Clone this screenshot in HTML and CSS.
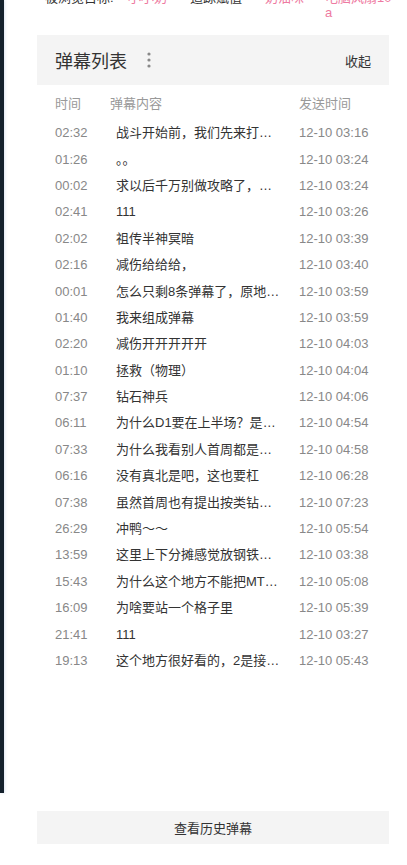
FILE: index.html
```html
<!DOCTYPE html>
<html lang="zh-CN">
<head>
<meta charset="utf-8">
<title>弹幕列表</title>
<link rel="stylesheet" href="styles.css">
</head>
<body>
<div class="layout">
  <div class="edge"></div>
  <div class="main">
    <div class="info">
      <span class="c1 dark">被浏览目标:</span>
      <span class="c2 pink">小小奶</span>
      <span class="c3 dark">追踪赋值</span>
      <span class="c4 pink">奶油味</span>
      <span class="c5 pink">电脑风扇10a</span>
    </div>
    <div class="panel">
      <div class="panel-head">
        <div class="head-left">
          <span class="title">弹幕列表</span>
          <svg class="dots" width="4" height="16" viewBox="0 0 4 16"><circle cx="2" cy="2" r="1.6"/><circle cx="2" cy="8" r="1.6"/><circle cx="2" cy="14" r="1.6"/></svg>
        </div>
        <span class="collapse">收起</span>
      </div>
      <div class="cols">
        <span>时间</span><span>弹幕内容</span><span>发送时间</span>
      </div>
      <div class="list">
        <div class="row"><span class="t">02:32</span><span class="m">战斗开始前，我们先来打个招呼吧</span><span class="d">12-10 03:16</span></div>
        <div class="row"><span class="t">01:26</span><span class="m">。。</span><span class="d">12-10 03:24</span></div>
        <div class="row"><span class="t">00:02</span><span class="m">求以后千万别做攻略了，真的</span><span class="d">12-10 03:24</span></div>
        <div class="row"><span class="t">02:41</span><span class="m">111</span><span class="d">12-10 03:26</span></div>
        <div class="row"><span class="t">02:02</span><span class="m">祖传半神冥暗</span><span class="d">12-10 03:39</span></div>
        <div class="row"><span class="t">02:16</span><span class="m">减伤给给给，</span><span class="d">12-10 03:40</span></div>
        <div class="row"><span class="t">00:01</span><span class="m">怎么只剩8条弹幕了，原地起飞</span><span class="d">12-10 03:59</span></div>
        <div class="row"><span class="t">01:40</span><span class="m">我来组成弹幕</span><span class="d">12-10 03:59</span></div>
        <div class="row"><span class="t">02:20</span><span class="m">减伤开开开开开</span><span class="d">12-10 04:03</span></div>
        <div class="row"><span class="t">01:10</span><span class="m">拯救（物理）</span><span class="d">12-10 04:04</span></div>
        <div class="row"><span class="t">07:37</span><span class="m">钻石神兵</span><span class="d">12-10 04:06</span></div>
        <div class="row"><span class="t">06:11</span><span class="m">为什么D1要在上半场？是不是</span><span class="d">12-10 04:54</span></div>
        <div class="row"><span class="t">07:33</span><span class="m">为什么我看别人首周都是这样</span><span class="d">12-10 04:58</span></div>
        <div class="row"><span class="t">06:16</span><span class="m">没有真北是吧，这也要杠</span><span class="d">12-10 06:28</span></div>
        <div class="row"><span class="t">07:38</span><span class="m">虽然首周也有提出按类钻石的</span><span class="d">12-10 07:23</span></div>
        <div class="row"><span class="t">26:29</span><span class="m">冲鸭～～</span><span class="d">12-10 05:54</span></div>
        <div class="row"><span class="t">13:59</span><span class="m">这里上下分摊感觉放钢铁更好</span><span class="d">12-10 03:38</span></div>
        <div class="row"><span class="t">15:43</span><span class="m">为什么这个地方不能把MT放过去</span><span class="d">12-10 05:08</span></div>
        <div class="row"><span class="t">16:09</span><span class="m">为啥要站一个格子里</span><span class="d">12-10 05:39</span></div>
        <div class="row"><span class="t">21:41</span><span class="m">111</span><span class="d">12-10 03:27</span></div>
        <div class="row"><span class="t">19:13</span><span class="m">这个地方很好看的，2是接着来</span><span class="d">12-10 05:43</span></div>
      </div>
      <div class="history">查看历史弹幕</div>
    </div>
  </div>
</div>
</body>
</html>
```

FILE: styles.css
```css
html, body {
  margin: 0;
  padding: 0;
  background: #ffffff;
}
body {
  font-family: "Liberation Sans", "Noto Sans CJK SC", sans-serif;
  color: #333;
  overflow: hidden;
}
.layout {
  display: flex;
  align-items: flex-start;
}
.edge {
  flex: 0 0 4px;
  height: 793px;
  background: #14212c;
  box-shadow: 1px 0 3px rgba(120, 150, 200, 0.25);
}
.main {
  padding-left: 33px;
  width: 352px;
}
.info {
  display: flex;
  align-items: flex-start;
  margin-top: -10px;
  margin-left: -33px;
  padding-left: 41px;
  font-size: 13px;
  line-height: 15px;
  height: 30px;
  margin-bottom: 15px;
}
.info .dark { color: #333; }
.info .pink { color: #ee7aa1; }
.c1 { flex: 0 0 83px; }
.c2 { flex: 0 0 62px; }
.c3 { flex: 0 0 75px; }
.c4 { flex: 0 0 60px; }
.c5 { flex: 0 0 68px; word-break: break-all; }

.panel {
  width: 352px;
  background: #fff;
}
.panel-head {
  height: 50px;
  background: #f4f4f4;
  display: flex;
  align-items: center;
  justify-content: space-between;
  padding: 0 18px;
}
.head-left {
  display: flex;
  align-items: center;
  gap: 20px;
}
.title {
  font-size: 18px;
  color: #333;
}
.dots {
  fill: #888;
  display: block;
}
.collapse {
  font-size: 13px;
  color: #333;
}
.cols {
  display: grid;
  grid-template-columns: 55px 189px 1fr;
  padding-left: 18px;
  height: 35px;
  align-items: center;
  font-size: 13px;
  color: #999;
}
.list {
  height: 691px;
  overflow: hidden;
}
.row {
  display: grid;
  grid-template-columns: 55px 189px 1fr;
  padding-left: 18px;
  height: 26.4px;
  align-items: center;
  font-size: 13px;
  line-height: 16px;
}
.row .t { color: #888; }
.row .m {
  color: #333;
  padding-left: 6px;
  padding-right: 16px;
  white-space: nowrap;
  overflow: hidden;
  text-overflow: ellipsis;
}
.row .d { color: #888; }
.history {
  height: 33px;
  background: #f4f4f4;
  display: flex;
  align-items: center;
  justify-content: center;
  font-size: 13px;
  color: #333;
}
```
